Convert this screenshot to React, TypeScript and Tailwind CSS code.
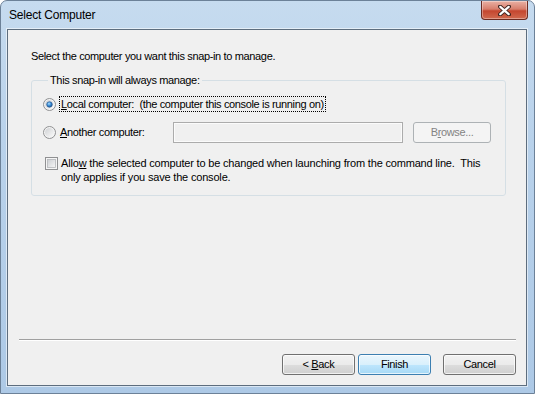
import React from 'react';

function Radio({ checked }: { checked?: boolean }) {
    return (
        <svg width="13" height="13" viewBox="0 0 13 13" className="shrink-0">
            <defs>
                <linearGradient id="rIn" x1="0" y1="0" x2="1" y2="1">
                    <stop offset="0" stopColor="#cfd1d4" />
                    <stop offset="1" stopColor="#fafafa" />
                </linearGradient>
                <radialGradient id="rDot" cx="0.4" cy="0.35" r="0.7">
                    <stop offset="0" stopColor="#a9dcff" />
                    <stop offset="0.5" stopColor="#3c8fd6" />
                    <stop offset="1" stopColor="#1a4f8b" />
                </radialGradient>
            </defs>
            <circle cx="6.5" cy="6.5" r="6" fill="#f4f4f4" stroke="#8f9092" />
            <circle cx="6.5" cy="6.5" r="4.5" fill="url(#rIn)" />
            {checked && <circle cx="6.5" cy="6.5" r="2.8" fill="url(#rDot)" stroke="#23518a" strokeWidth="0.6" />}
        </svg>
    );
}

function Checkbox() {
    return (
        <svg width="13" height="13" viewBox="0 0 13 13" className="shrink-0">
            <defs>
                <linearGradient id="cIn" x1="0" y1="0" x2="1" y2="1">
                    <stop offset="0" stopColor="#cbced2" />
                    <stop offset="1" stopColor="#f7f7f7" />
                </linearGradient>
            </defs>
            <rect x="0.5" y="0.5" width="12" height="12" fill="#f5f5f5" stroke="#8f9092" />
            <rect x="2.5" y="2.5" width="8" height="8" fill="url(#cIn)" stroke="#b3b6ba" strokeWidth="0.8" />
        </svg>
    );
}

function Button({ children, primary }: { children: React.ReactNode; primary?: boolean }) {
    const skin = primary
        ? 'border-[#3c7fb1] bg-[linear-gradient(180deg,#eaf6fd_0%,#d9f0fc_50%,#bee6fd_51%,#a7d9f5_100%)]'
        : 'border-[#707070] bg-[linear-gradient(180deg,#f2f2f2_0%,#ebebeb_50%,#dddddd_51%,#cfcfcf_100%)]';
    return (
        <button className={`w-[73px] h-[21px] rounded-[3px] border text-[11px] text-black shadow-[inset_0_0_0_1px_rgba(255,255,255,0.7)] flex items-center justify-center ${skin}`}>
            <span className="whitespace-pre">{children}</span>
        </button>
    );
}

export default function App() {
    return (
        <div className="w-[535px] h-[394px] flex flex-col overflow-hidden rounded-t-[7px] border border-[#6c8198] bg-[linear-gradient(180deg,#c6dbef_0%,#b9d2eb_35%,#adc9e6_100%)] font-['Liberation_Sans',Arial,sans-serif] text-[11px] tracking-[-0.35px] text-black">

            {/* Title bar */}
            <div className="h-[28px] shrink-0 flex items-start justify-between">
                <span className="pl-[8px] pt-[7px] text-[12px] leading-[15px] tracking-[-0.2px]">Select Computer</span>
                <button className="mr-[6px] w-[47px] h-[19px] rounded-b-[4px] border border-t-0 border-[#6b2b22] bg-[linear-gradient(180deg,#eab1a4_0%,#d77e6c_45%,#c4462f_55%,#d06a4f_100%)] flex items-center justify-center shadow-[inset_0_0_0_1px_rgba(255,255,255,0.35)]">
                    <svg width="13" height="11" viewBox="0 0 13 11">
                        <path d="M2 1.5 L11 9.5 M11 1.5 L2 9.5" stroke="#3d2420" strokeWidth="4" strokeLinecap="round" />
                        <path d="M2.3 1.8 L10.7 9.2 M10.7 1.8 L2.3 9.2" stroke="#ffffff" strokeWidth="2.2" strokeLinecap="round" />
                    </svg>
                </button>
            </div>

            {/* Client area */}
            <div className="flex-1 ml-[6px] mr-[7px] mb-[7px] border border-[#5d6d7e] bg-[#f0f0f0] shadow-[0_0_0_1px_rgba(255,255,255,0.55)] flex flex-col">
                <p className="mt-[19px] ml-[23px] leading-[14px]">Select the computer you want this snap-in to manage.</p>

                <fieldset className="mt-[10px] ml-[23px] mr-[20px] border border-[#d5dfe5] rounded-[3px] pl-[11px] pb-[11px]">
                    <legend className="ml-[5px] px-[2px] leading-[14px]">This snap-in will always manage:</legend>

                    <div className="mt-[9px] h-[16px] flex items-center">
                        <Radio checked />
                        <span className="ml-[3px] px-[1px] leading-[14px] border border-dotted border-black whitespace-pre">
                            <span className="underline">L</span>ocal computer:  (the computer this console is running on)
                        </span>
                    </div>

                    <div className="mt-[10px] h-[21px] flex items-center">
                        <Radio />
                        <span className="ml-[4px] w-[113px]"><span className="underline">A</span>nother computer:</span>
                        <div className="w-[230px] h-[21px] border border-[#acacac] bg-[#f0f0f0] shadow-[inset_0_0_0_1px_#fbfbfb]" />
                        <button className="ml-[10px] w-[78px] h-[21px] rounded-[3px] border border-[#adb2b5] bg-[#f4f4f4] text-[#838383] flex items-center justify-center">
                            <span>B<span className="underline">r</span>owse...</span>
                        </button>
                    </div>

                    <div className="mt-[13px] flex items-start">
                        <div className="ml-[2px] mt-[1px]"><Checkbox /></div>
                        <p className="ml-[3px] leading-[14px] whitespace-pre tracking-[-0.18px]">
                            Allo<span className="underline">w</span> the selected computer to be changed when launching from the command line.  This{'\n'}only applies if you save the console.
                        </p>
                    </div>
                </fieldset>

                <div className="mt-auto mx-[11px] mr-[10px] h-px bg-[#a0a0a0] shadow-[0_1px_0_#ffffff]" />

                <div className="mt-[14px] mb-[10px] mr-[10px] flex justify-end">
                    <Button>{'< '}<span className="underline">B</span>ack</Button>
                    <div className="ml-[3px]"><Button primary>Finish</Button></div>
                    <div className="ml-[12px]"><Button>Cancel</Button></div>
                </div>
            </div>
        </div>
    );
}
